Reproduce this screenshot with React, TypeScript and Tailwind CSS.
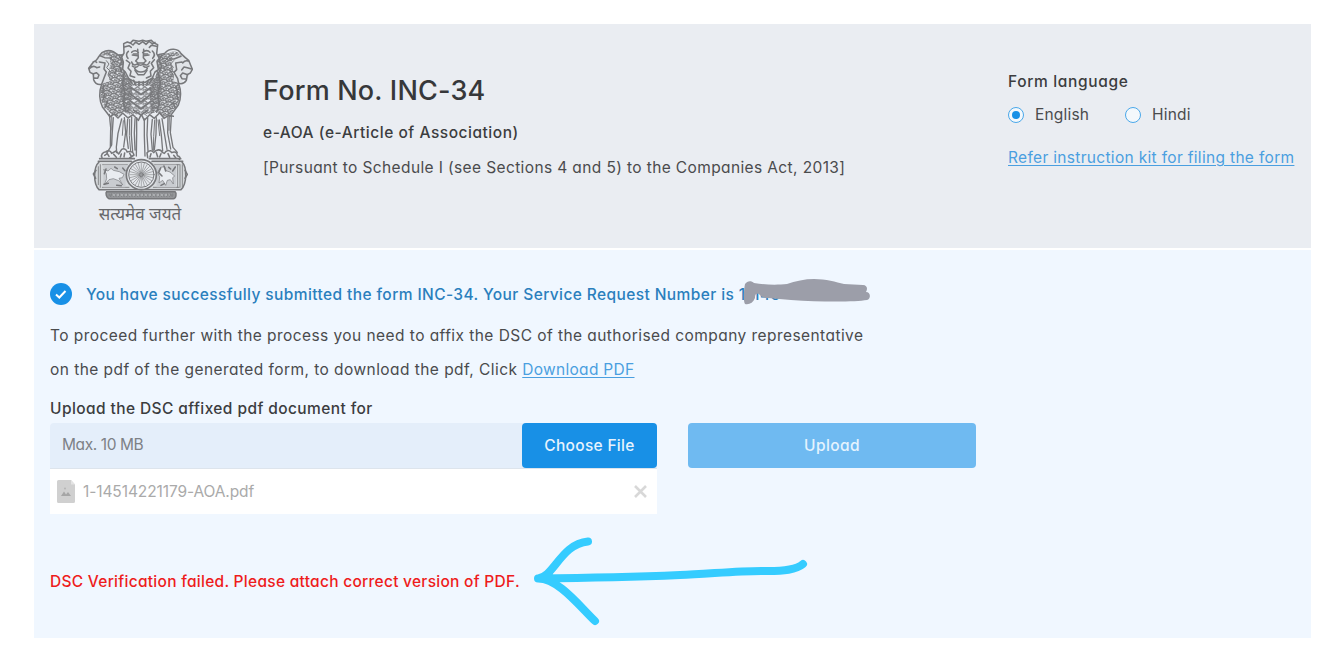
import { useState } from 'react';

const Emblem = () => (
  <svg
    className="block h-[172px] w-[130px]"
    viewBox="0 0 390 516"
    fill="none"
    stroke="#77787b"
    strokeWidth="4.6"
    strokeLinecap="round"
    strokeLinejoin="round"
  >
    <defs>
      <pattern id="maneLeft" width="17" height="15" patternUnits="userSpaceOnUse" patternTransform="rotate(-18)">
        <path d="M1 2c8 0 9 9 15 11M16 1c-3 2-6 2-7 3M1 9c3 0 4 4 6 5" stroke="#77787b" strokeWidth="4.6" />
      </pattern>
      <pattern id="maneRight" width="17" height="15" patternUnits="userSpaceOnUse" patternTransform="rotate(18)">
        <path d="M16 2c-8 0-9 9-15 11M1 1c3 2 6 2 7 3M16 9c-3 0-4 4-6 5" stroke="#77787b" strokeWidth="4.6" />
      </pattern>
      <pattern id="chest" x="173" width="22" height="14" patternUnits="userSpaceOnUse">
        <path d="M0 2l10 9 11-9M1 10l4 3M20 10l-4 3" stroke="#77787b" strokeWidth="3.6" />
      </pattern>
      <pattern id="beads" width="8" height="12" patternUnits="userSpaceOnUse">
        <path d="M1 2l5 8M6 1v3" stroke="#77787b" strokeWidth="2.5" />
      </pattern>
    </defs>

    {/* side manes */}
    <path d="M62 77c8-13 25-17 37-12l14 9 20-1 2 58 22 38-7 85-20-9-18 14-16-4-24-27c-15-25-13-51-1-73l-9-17 13-31z" fill="url(#maneLeft)" stroke="none" />
    <path d="M304 75c-9-12-27-14-37-6l-35 7-4 62-20 35 5 79 18-8 17 17 21-6 23-30c11-22 9-48 2-66l9-20-7-31z" fill="url(#maneRight)" stroke="none" />
    <path d="M132 131l32 24h43l28-26 12 51-15 58-31 21-19-12-20 12-30-18-13-59z" fill="url(#chest)" stroke="none" />

    {/* left head */}
    <path d="M62 76l26 2 4 24-7 28 4 24-22 6-15-15-14-3-4-18-9-8 13-21z" fill="#e0e3e7" stroke="none" />
    <path d="M59 76c7-13 26-18 41-11l13 9 20 1M62 78l12 5 20 1M59 77c-8 8-6 15-18 18l-15 20 4 12 10 5 1 17c3 9 11 16 24 14M39 96c4-3 9-2 11 1M29 115c8-8 16-7 21-2l9-2M39 132l10-4 8 7-4 10-10-1M58 96l17 3-3 18 7 9-7 18-7 19" />
    <path d="M79 92l8 10-7 11 9 9-5 13 6 10M92 83l13 12-6 12 10 10-6 13" strokeWidth="3" />
    <path d="M65 163c-8 22-9 45 3 69l22 28M72 167l-4 22M75 190l-6 20M83 215l-8 18" />

    {/* right head */}
    <path d="M303 76l-24 3-5 24 9 27-3 24 20 6 14-13 11-3 4-18 8-8-11-24z" fill="#e0e3e7" stroke="none" />
    <path d="M233 76c7-7 16-1 22-7 14-16 39-14 48 2 8 8 12 12 23 20l11 27-6 11-9 5-3 17c-5 8-14 12-24 9M327 94c-7-3-15 0-19 5M337 118l-15-5-10-2-7 9M323 134l-15-5-7 8 5 9 12 1M303 79l-21 8-13 0M306 96l-19 3 3 20-8 8 11 19 3 15" />
    <path d="M281 92l-9 10 8 10-9 9 7 11-7 13M265 83l-12 12 8 11-11 11" strokeWidth="3" />
    <path d="M296 161c8 21 8 42-1 64l-25 34M288 169l5 20M290 192l4 17M279 217l6 14" />

    {/* front head */}
    <path d="M131 41l11-5 9 3 8-8 18 3 11-3 10 3 16-3 8 8 11 5-3 27 8 14-7 9 4 25-10 7-8 18-22 13h-27l-22-11-10-20-8-8 2-22-5-15 7-12z" fill="#e4e7eb" />
    <path d="M133 51l14-4 7 5M151 39l8 6 8-9 10 7 11-8 10 8 9-9 11 8 7-5M229 49l-15-3-6 6M145 64c-7 6-7 15-1 21M217 63c8 7 7 15 1 22" />
    <path d="M155 67c6-7 17-6 20 1M188 68c5-8 17-8 22-1M157 75l16 2M190 77l17-2M173 58l2 25-8 10 7 6h17l7-6-8-10 1-25" />
    <path d="M155 96c2 10 11 11 18 5 5 6 12 6 17 0 7 7 16 5 19-6M157 108c6 6 16 3 17 0M190 108c4 5 12 5 17 0M164 115c6 14 30 15 38 0M160 72h11M192 72h11" />
    <path d="M139 91l11 8-6 15 9 10-3 13 14 5M223 89l-9 11 7 13-10 11 2 14-14 6M165 121l9 13h18l9-13" />
    <path d="M145 145l11 14M161 151l5 13M177 155v12M190 155v12M205 151l-4 13M219 145l-11 14" strokeWidth="5" />
    <path d="M133 128l-6 31 8 31-5 30 8 25M235 128l7 32-9 30 5 30-8 27M117 76l9 19-8 14 7 16M244 76l-7 18 8 14-6 16" />
    <path d="M155 174l28 20 28-20M151 192l32 24 31-24M153 214l30 23 29-23M160 240l23 15 21-15" strokeWidth="5" />
    <path d="M90 260l12-8 12 12 14-15 16 15 15-10 16 17 9-18 9 18 16-17 14 11 16-17 13 17 14-9 14 3" />

    {/* legs */}
    <path d="M88 253l4 40-1 59-11 17M100 263l-3 41-2 41-13 22M125 267l-11 43-5 41 1 17M133 263l4 43-6 45M143 268l-3 47 5 40M155 261l-1 54 4 51M170 263v48l-1 67M165 266l-2 44 2 50M193 267v51l2 60M203 263l-2 52 3 48M217 268l-4 44 4 48M229 263l-1 49-5 48M238 270l6 45 4 48M246 266l8 50 7 42M264 259l-1 50 9 48M274 257l-3 51 8 44 13 15" strokeWidth="4" />
    <path d="M149 268l-1 49 4 47M130 272l-3 44M224 270l-3 50-1 42M234 270l5 47M95 257l1 43M268 258l-1 43" strokeWidth="3" />

    {/* paws */}
    <path d="M66 383c-5-8 3-17 12-18 7-6 14-2 17 5l13-7 8 9 9-14c9-4 15 1 16 8 10-4 20 0 21 9l-13 9M203 383l-2-14c5-8 15-9 20-1 7-10 21-12 26-1l6 3c6-10 16-12 22-2 9-5 17-1 17 9 8 2 10 7 6 11M74 376l8-5 5 8M101 373l8 9M124 372l-3 9M134 369l-2 12M149 370l5 9M213 371l-3 10M229 368l4 12M243 371l-4 10M264 371l5 11M281 376l6 7" />

    {/* abacus */}
    <path d="M59 386h104M208 386h94M55 394h99M216 394h92" strokeWidth="5" />
    <path d="M57 396c-17 15-18 66 0 83h246c18-17 19-67 3-83" fill="#d6d9dc" />
    <path d="M48 421l-8 11 7 13M315 421l7 12-7 12" />
    <path d="M61 404v68M300 404v68M307 404v66M68 404h74M224 404h74M67 472h80M220 472h77M55 410v54M293 404v68" strokeWidth="2.5" />
    <path d="M70 404h70l-4 68H70zM226 404h62v68h-58z" fill="#c9ccd0" stroke="none" />
    <path d="M72 419l12 4 9-8 7 6 18 4 14 8-5 10-10 2 11 20-12-13-16-6-13 3-14 16 7-19-1-14zM233 427l9-15 12-2 4 12 12 4 14 12-6 5 2 19-9-13-9 2-5 15-9-15-11 8 2-17z" fill="#e9ecf0" strokeWidth="2" />
    <path d="M78 417l-5 14M128 414l7 8M112 416l-8-5M242 414l-6 14 10 10M252 408l5 15M72 463l13-3M110 466l14 1M243 466l10-5M286 411l-8 12M266 412l6 5" />

    {/* wheel */}
    <circle cx="184" cy="434" r="45" fill="#e4e7eb" strokeWidth="5" />
    <circle cx="184" cy="434" r="38" strokeWidth="3" />
    {Array.from({ length: 24 }, (_, i) => (
      <path key={i} d="M184 426v-27" strokeWidth="1.6" transform={`rotate(${i * 15} 184 434)`} />
    ))}
    <circle cx="184" cy="434" r="6" fill="#999b9e" strokeWidth="3" />

    {/* plinth */}
    <path d="M80 485h205c6 5 3 21-5 21H87c-8-2-11-17-7-21z" fill="#95979a" />
    <path d="M86 489h194v13H86z" fill="url(#beads)" stroke="none" />
    <path d="M99 495h169" stroke="#d0d3d6" strokeWidth="3" strokeDasharray="5 7" />
  </svg>
);

const FileIcon = () => (
  <svg className="h-[23px] w-[18px]" viewBox="0 0 18 23">
    <path d="M0 1.5A1.5 1.5 0 0 1 1.5 0H14l4 4.5v17a1.5 1.5 0 0 1-1.5 1.5h-15A1.5 1.5 0 0 1 0 21.5z" fill="#d0d0d0" />
    <path d="M14 0v4.5h4z" fill="#e4e4e4" />
    <path d="M4 16l3-4.5 2 3 2-2.5 3 4z" fill="#a6a6a6" />
    <circle cx="8" cy="8.5" r="1" fill="#b5b5b5" />
  </svg>
);

const Radio = ({
  label,
  checked,
  onSelect,
}: {
  label: string;
  checked: boolean;
  onSelect: () => void;
}) => (
  <button type="button" className="flex items-center" onClick={onSelect}>
    <span className="flex size-4 items-center justify-center rounded-full border border-[#4aa8ea] bg-[#f3f8fc]">
      {checked && <span className="size-2 rounded-full bg-[#1890e6]" />}
    </span>
    <span className="ml-[11px] tracking-[0.2px]">{label}</span>
  </button>
);

const App = () => {
  const [language, setLanguage] = useState('English');

  return (
    <div className="relative h-[658px] w-[1339px] overflow-hidden bg-white pt-6 pl-[34px] font-[Inter,'Open_Sans',sans-serif] text-[15.5px] leading-6 whitespace-nowrap text-[#4a4b4d] [font-feature-settings:'cv11']">
      <header className="flex h-[224px] w-[1277px] bg-[#eaedf2]">
        <div className="w-[229px] pt-1.5 pl-[46px]">
          <Emblem />
          <div className="mt-0.5 w-[120px] text-center font-['Noto_Sans_Devanagari','Noto_Sans',sans-serif] text-[17px] leading-6 text-[#66676a]">
            सत्यमेव जयते
          </div>
        </div>
        <div className="w-[745px] pt-[49px]">
          <h1 className="text-[27px] leading-9 font-medium tracking-[0.2px] text-[#37383a]">
            Form No. INC-34
          </h1>
          <h2 className="mt-3 font-medium tracking-[0.53px] text-[#3c3d3f]">
            e-AOA (e-Article of Association)
          </h2>
          <p className="mt-[11px] tracking-[0.38px]">
            [Pursuant to Schedule I (see Sections 4 and 5) to the Companies Act, 2013]
          </p>
        </div>
        <div className="pt-12">
          <div className="leading-5 font-medium tracking-[0.65px] text-[#3c3d3f]">Form language</div>
          <div className="mt-[11px] flex">
            <div className="w-[117px]">
              <Radio
                label="English"
                checked={language === 'English'}
                onSelect={() => setLanguage('English')}
              />
            </div>
            <Radio
              label="Hindi"
              checked={language === 'Hindi'}
              onSelect={() => setLanguage('Hindi')}
            />
          </div>
          <a
            href="#kit"
            className="mt-[19px] block tracking-[0.32px] text-[#4a9fe0] underline underline-offset-2"
          >
            Refer instruction kit for filing the form
          </a>
        </div>
      </header>

      <main className="mt-0.5 h-[388px] w-[1277px] bg-[#f0f7ff] pt-8 pl-4">
        <div className="flex h-6 items-center font-medium text-[#2a7fbd]">
          <svg className="size-[22px]" viewBox="0 0 22 22" fill="none">
            <circle cx="11" cy="11" r="11" fill="#1890e6" />
            <path d="M6 11.5l3.3 3L15.5 8" stroke="#fff" strokeWidth="2" />
          </svg>
          <span className="ml-3.5 pt-px tracking-[0.4px]">
            You have successfully submitted the form INC-34. Your Service Request Number is 1-145
          </span>
        </div>
        <p className="mt-[13px] leading-[34px] tracking-[0.44px]">
          To proceed further with the process you need to affix the DSC of the authorised company representative
          <br />
          on the pdf of the generated form, to download the pdf, Click{' '}
          <a href="#pdf" className="tracking-[0.3px] text-[#4a9fe0] underline underline-offset-2">
            Download PDF
          </a>
        </p>
        <div className="mt-2.5 font-medium tracking-[0.41px] text-[#3c3d3f]">
          Upload the DSC affixed pdf document for
        </div>

        <div className="mt-0.5 flex gap-[31px]">
          <div className="w-[607px]">
            <div className="flex h-[46px] rounded-t border-b border-[#dde4ec] bg-[#e4eefa]">
              <span className="flex-1 pt-2.5 pl-3 tracking-[-0.4px] text-[#7d8186]">Max. 10 MB</span>
              <button
                type="button"
                className="h-[45px] w-[135px] rounded bg-[#1890e6] font-medium tracking-[0.3px] text-[#e6f3fd]"
              >
                Choose File
              </button>
            </div>
            <div className="flex h-[45px] items-center bg-white pl-[7px] text-[#aaaaaa]">
              <FileIcon />
              <span className="ml-2 flex-1 tracking-[-0.1px]">1-14514221179-AOA.pdf</span>
              <svg className="mr-2.5 size-[13px]" viewBox="0 0 13 13" stroke="#d8d8d8" strokeWidth="2.6">
                <path d="M1 1l11 11M12 1L1 12" />
              </svg>
            </div>
          </div>
          <button
            type="button"
            className="h-[45px] w-[288px] rounded bg-[#6fbaf1] pt-px font-medium tracking-[0.4px] text-[#e4f3fe]"
          >
            Upload
          </button>
        </div>

        <div className="mt-14 font-medium tracking-[0.28px] text-[#ee1c1c]">
          DSC Verification failed. Please attach correct version of PDF.
        </div>
      </main>

      {/* marker over the request number */}
      <svg className="absolute top-[270px] left-[740px] h-10 w-[140px]" viewBox="0 0 140 40" fill="#9c9ea9">
        <path d="M5 14c2-3 6-4 9-1 12 2 24 2 33 1 8-3 18-5 27-5 12 0 22 3 30 5l19 1c4 0 5 4 3 7 5 0 5 7 1 8-12 2-46 2-76 0l-23-2c-4 0-7-1-9-4-3-1-4 0-4 4-2 5-6 7-10 6-2-3-1-15 0-20z" />
      </svg>

      {/* pen arrow pointing at the error */}
      <svg
        className="absolute top-[520px] left-[530px] h-[120px] w-[290px]"
        viewBox="0 0 290 120"
        fill="none"
        stroke="#35ccff"
        strokeWidth="8"
        strokeLinecap="round"
        strokeLinejoin="round"
      >
        <path d="M273 44c-7 6-20 7-35 7-24-1-59 3-88 4-47 2-95 3-142 3.5C24 57 31 24 58 21.5M8 58.5c20 0 40 26 57 42.5" />
      </svg>
    </div>
  );
};

export default App;
